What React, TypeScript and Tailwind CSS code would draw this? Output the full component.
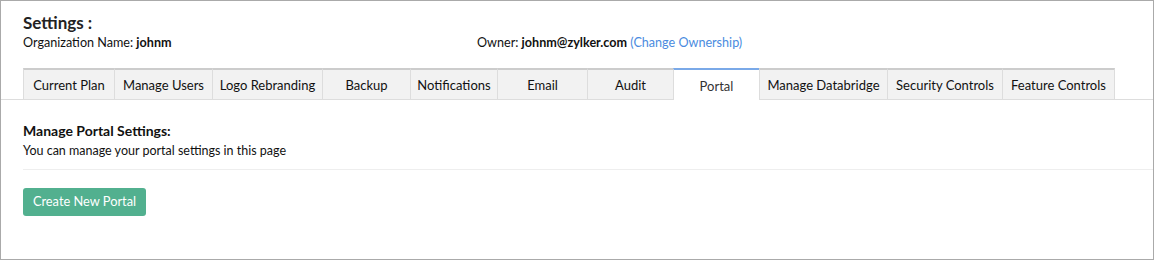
import React from 'react';

const tabs = [
  { label: 'Current Plan', w: 'w-[91px]' },
  { label: 'Manage Users', w: 'w-[98px]' },
  { label: 'Logo Rebranding', w: 'w-[110px]' },
  { label: 'Backup', w: 'w-[88px]' },
  { label: 'Notifications', w: 'w-[87px]' },
  { label: 'Email', w: 'w-[90px]' },
  { label: 'Audit', w: 'w-[86px]' },
  { label: 'Portal', w: 'w-[86px]', active: true },
  { label: 'Manage Databridge', w: 'w-[128px]' },
  { label: 'Security Controls', w: 'w-[115px]' },
  { label: 'Feature Controls', w: 'w-[113px]' },
];

export default function App() {
  return (
    <div className="w-[1154px] h-[260px] border border-[#aaaaaa] bg-white text-[#111] font-['Lato','Liberation_Sans',sans-serif] overflow-hidden">
      <div className="px-[22px] pt-[11px]">
        <h1 className="text-[17px] font-bold leading-[22px] text-[#222]">Settings :</h1>
        <div className="flex text-[12.6px] leading-[16px] mt-[1px]">
          <div className="w-[454px]">
            Organization Name: <span className="font-bold">johnm</span>
          </div>
          <div>
            Owner: <span className="font-bold">johnm@zylker.com</span>{' '}
            <a className="text-[#4a8be0] cursor-pointer">(Change Ownership)</a>
          </div>
        </div>
      </div>

      <div className="flex pl-[22px] mt-[17px] border-b border-[#dddddd]">
        {tabs.map((t) => (
          <div
            key={t.label}
            className={`${t.w} h-[32px] -mb-px pt-[3px] flex items-center justify-center text-[13px] border-t-2 border-l ${
              t.active
                ? 'bg-white border-t-[#7aa9e8] border-l-[#dddddd] text-[#333]'
                : 'bg-[#f2f2f2] border-t-[#cccccc] border-l-[#dddddd] border-b border-b-[#dddddd] text-[#111]'
            } ${t.label === 'Feature Controls' ? 'border-r border-r-[#dddddd]' : ''}`}
          >
            {t.label}
          </div>
        ))}
      </div>

      <div className="px-[22px] pt-[21px]">
        <div className="text-[14px] font-bold leading-[20px]">Manage Portal Settings:</div>
        <div className="text-[12.5px] leading-[20px]">You can manage your portal settings in this page</div>
        <div className="border-t border-[#eeeeee] mt-[8px] mr-[-22px]"></div>
        <button className="mt-[18px] h-[28px] w-[123px] rounded-[3px] bg-[#52b08f] text-white text-[12.8px]">
          Create New Portal
        </button>
      </div>
    </div>
  );
}
